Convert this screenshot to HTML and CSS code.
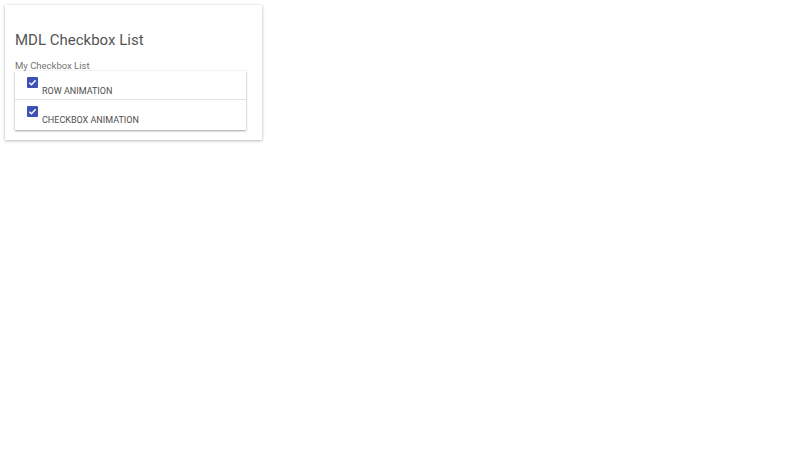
FILE: index.html
```html
<!DOCTYPE html>
<html>
<head>
<meta charset="utf-8">
<link rel="stylesheet" href="styles.css">
</head>
<body>
<div class="card">
  <h2 class="title">MDL Checkbox List</h2>
  <div class="caption">My Checkbox List</div>
  <ul class="list">
    <li class="row">
      <span class="box"><svg viewBox="0 0 12 12" width="11" height="11"><path d="M2.6 6.2 L4.9 8.4 L9.4 3.6" fill="none" stroke="#fff" stroke-width="1.6"/></svg></span>
      <span class="label">ROW ANIMATION</span>
    </li>
    <li class="row">
      <span class="box"><svg viewBox="0 0 12 12" width="11" height="11"><path d="M2.6 6.2 L4.9 8.4 L9.4 3.6" fill="none" stroke="#fff" stroke-width="1.6"/></svg></span>
      <span class="label">CHECKBOX ANIMATION</span>
    </li>
  </ul>
</div>
</body>
</html>
```
FILE: styles.css
```css
html, body { margin: 0; padding: 0; background: #fff; }
body { font-family: Roboto, "Liberation Sans", sans-serif; }
.card {
  margin: 5px;
  width: 257px;
  height: 135px;
  box-sizing: border-box;
  padding: 25px 10px 0 10px;
  background: #fff;
  box-shadow: 0 1px 3px rgba(0,0,0,0.25), 0 0 2px rgba(0,0,0,0.08);
}
.title {
  margin: 0;
  font-size: 15px;
  font-weight: 400;
  line-height: 20px;
  color: #555;
}
.caption {
  margin-top: 9px;
  padding-top: 1px;
  font-size: 9.5px;
  line-height: 11px;
  color: #757575;
}
.list {
  list-style: none;
  margin: 0;
  padding: 0;
  width: 231px;
  background: #fff;
  box-shadow: 0 1px 2px rgba(0,0,0,0.35), 0 0 2px rgba(0,0,0,0.08);
}
.row {
  height: 29px;
  box-sizing: border-box;
  display: flex;
  align-items: flex-start;
  padding: 6px 0 0 12px;
  border-bottom: 1px solid #e4e4e4;
}
.row:last-child { border-bottom: none; height: 30px; }
.box {
  width: 11px;
  height: 11px;
  background: #3f51b5;
  border-radius: 1px;
  display: flex;
}
.label {
  margin-left: 4px;
  margin-top: 9px;
  font-size: 9px;
  line-height: 10px;
  color: #4e4e4e;
}
```
